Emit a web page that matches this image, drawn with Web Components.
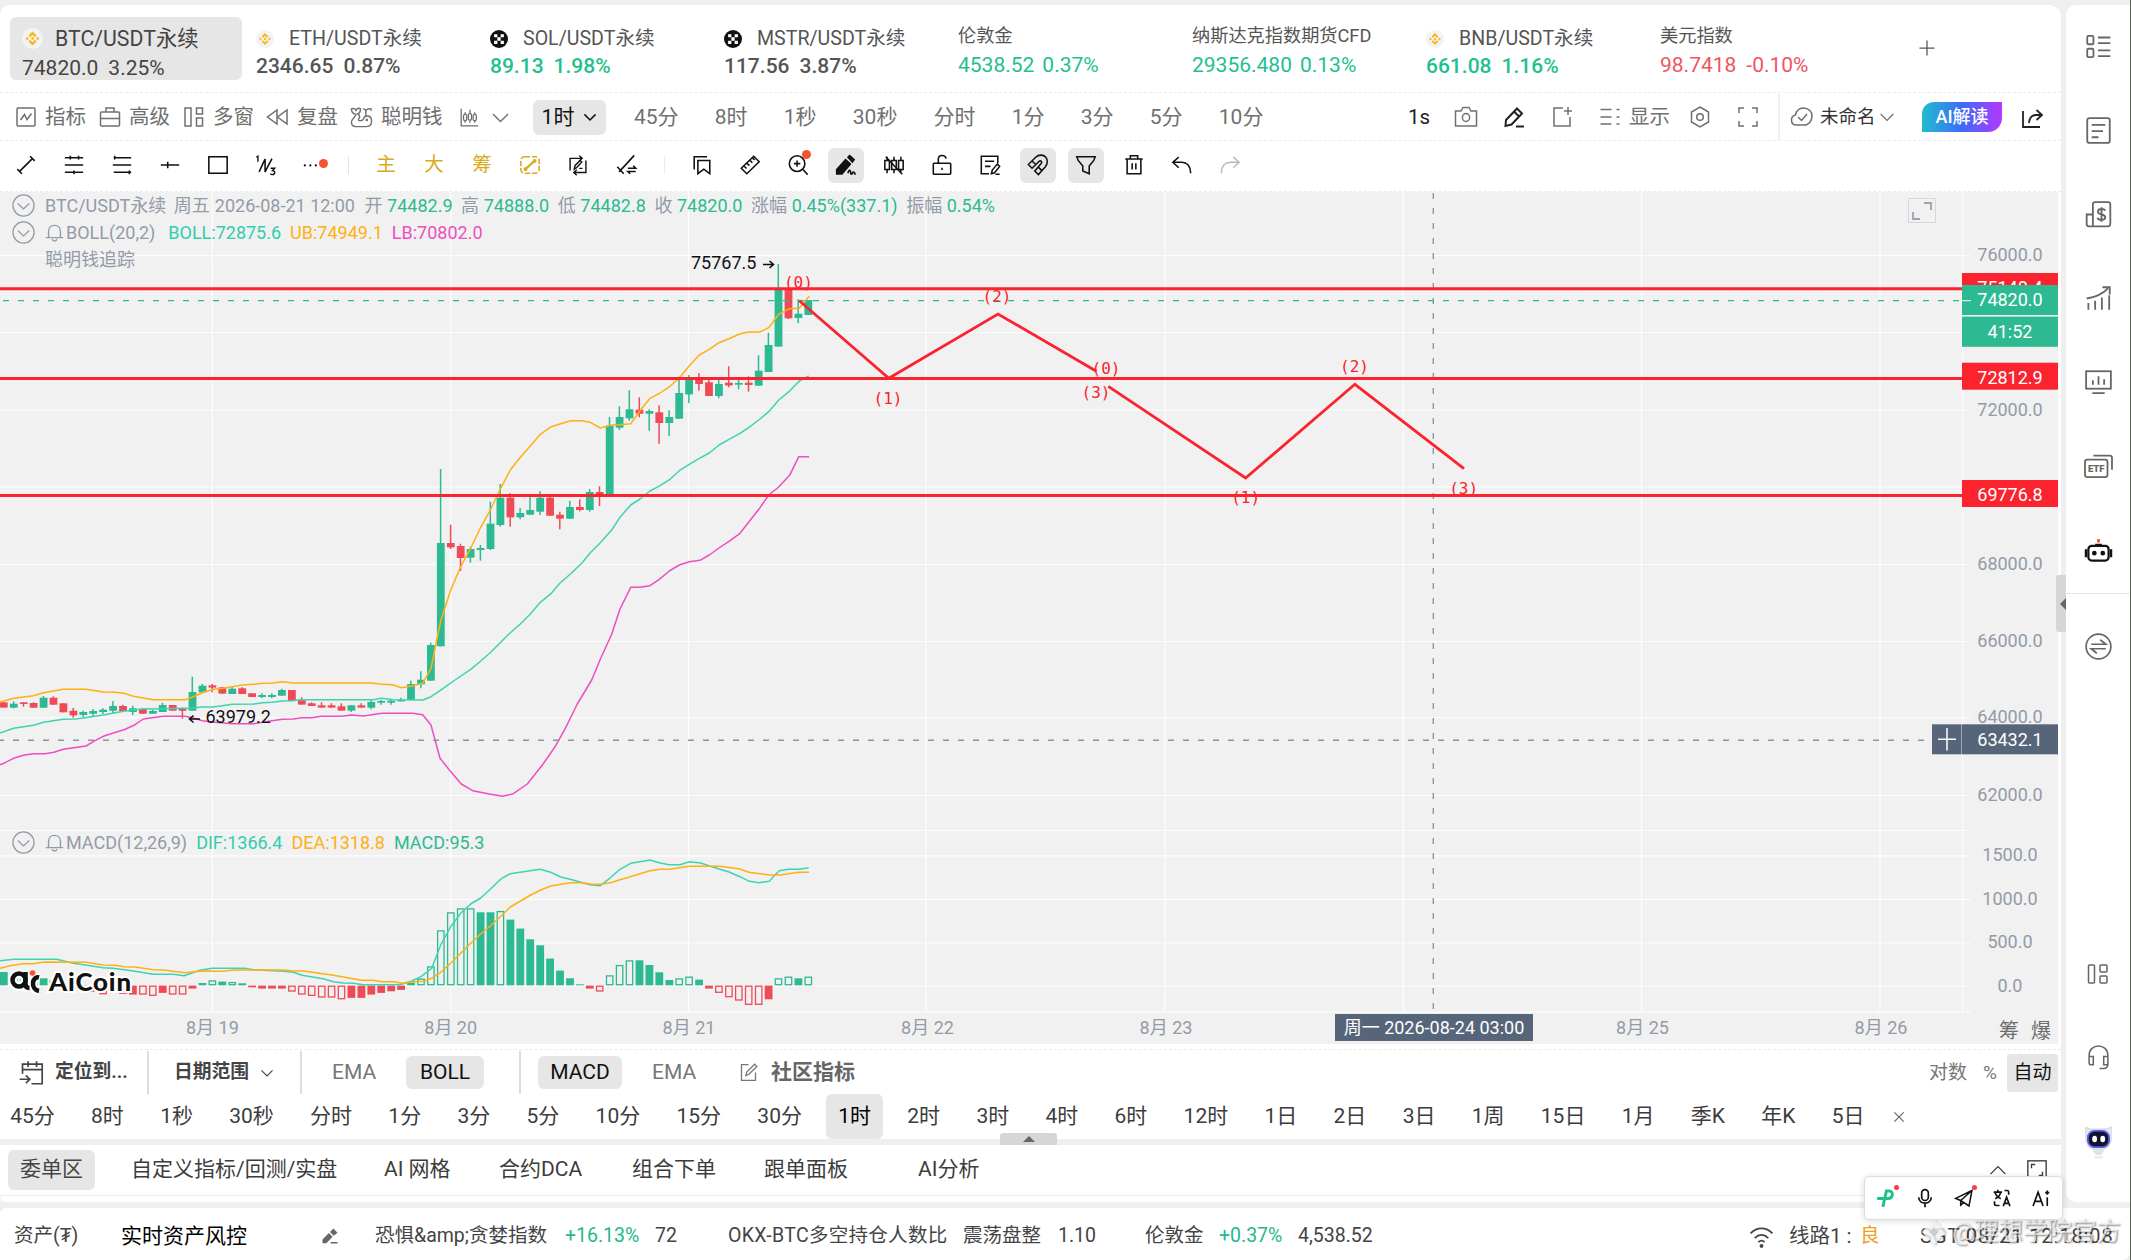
<!DOCTYPE html>
<html lang="zh-CN">
<head>
<meta charset="utf-8">
<title>BTC/USDT永续</title>
<style>
    html, body { margin: 0; height: 100%; }
    body {
        background: #efefef;
        color: #444;
        font-family: Roboto, "Noto Sans CJK SC", sans-serif;
        font-size: 21px;
        line-height: 1;
        overflow: hidden;
    }
</style>
</head>
<body>
<trade-app>
    <market-tabs slot="tabs">
        <market-tab icon="bnb" name="BTC/USDT永续" price="74820.0" change="3.25%" active></market-tab>
        <market-tab icon="bnb" name="ETH/USDT永续" price="2346.65" change="0.87%"></market-tab>
        <market-tab icon="okx" name="SOL/USDT永续" price="89.13" change="1.98%" tone="up"></market-tab>
        <market-tab icon="okx" name="MSTR/USDT永续" price="117.56" change="3.87%"></market-tab>
        <market-tab name="伦敦金" price="4538.52" change="0.37%" tone="up"></market-tab>
        <market-tab name="纳斯达克指数期货CFD" price="29356.480" change="0.13%" tone="up"></market-tab>
        <market-tab icon="bnb" name="BNB/USDT永续" price="661.08" change="1.16%" tone="up"></market-tab>
        <market-tab name="美元指数" price="98.7418" change="-0.10%" tone="down"></market-tab>
    </market-tabs>
    <main-toolbar slot="toolbar"></main-toolbar>
    <draw-toolbar slot="draw"></draw-toolbar>
    <price-chart slot="chart"></price-chart>
    <indicator-bar slot="indicators"></indicator-bar>
    <period-bar slot="periods"></period-bar>
    <order-tabs slot="orders"></order-tabs>
    <side-rail slot="rail"></side-rail>
    <status-bar slot="status"></status-bar>
    <float-tools slot="float"></float-tools>
</trade-app>

<script>
const ICONS = {
    bnb: '<circle cx="12" cy="12" r="12" fill="#f3f3f3" stroke="none"/><g fill="#f7b71d" stroke="none"><path d="M12 4l4.6 4.6-1.9 1.9L12 7.8l-2.7 2.7-1.9-1.9z"/><path d="M12 20l4.6-4.6-1.9-1.9-2.7 2.7-2.7-2.7-1.9 1.9z"/><path d="M6 10.100l1.900 1.900L6 13.900 4.100 12z"/><path d="M18 10.100l1.900 1.900-1.900 1.900-1.900-1.900z"/><path d="M12 10.100l1.900 1.900-1.900 1.900-1.900-1.900z"/></g>',
    okx: '<circle cx="12" cy="12" r="12" fill="#111" stroke="none"/><g fill="#fff" stroke="none"><path d="M5.500 5.500h4.300v4.300H5.500zM14.200 5.500h4.300v4.300h-4.300zM9.800 9.800h4.400v4.400H9.800zM5.500 14.200h4.300v4.300H5.500zM14.200 14.200h4.300v4.300h-4.300z"/></g>',
    plus: '<path d="M12 3v18M3 12h18"/>',
    indicator: '<rect x="3" y="3" width="18" height="18" rx="1"/><path d="M6.500 15l4-5.500 2.500 5 4.500-6"/>',
    briefcase: '<rect x="2.500" y="7" width="19" height="14" rx="1"/><path d="M8 7V3h8v4M2.500 13.500h19"/>',
    multi: '<rect x="3" y="3" width="6" height="18"/><rect x="14.500" y="3" width="6" height="6"/><rect x="14.500" y="13" width="6" height="8"/>',
    replay: '<path d="M12 5v14l-9.500-7zM22 5v14l-9.500-7z"/>',
    whale: '<path d="M6 8.500C3 8 1.500 6 1.500 3 3.500 2 5.500 3 6.200 4.500 7 3 9 2 11 3c0 3-1 4.500-3 5.500 2.500 1 2.500 3.500 1 5-1.500 2.500 4 2.500 5 0 .5-2 2-3 4-3 3 0 4.500 2.500 4.500 5.500 0 4-2.500 5.500-5.500 5.500H6c-3 0-4.500-2-4.500-4.500C1.500 13 6 12 6 8.500zM16.500 10V6c0-2-1.200-3.200-3-3M16.500 6c0-2 2-3.500 5.500-3v2"/><circle cx="17.500" cy="14.500" r=".6"/>',
    candles: '<path d="M2.500 2v19.500H22M7 6v2.500M7 15.500V18M12.500 3v4.500M12.500 15V18M18 6v2.500M18 15.500V18"/><rect x="5.200" y="8.500" width="3.600" height="7" rx="1.500"/><rect x="10.700" y="7.500" width="3.600" height="7.500" rx="1.500"/><rect x="16.200" y="8.500" width="3.600" height="7" rx="1.500"/>',
    down: '<path d="M2.500 7.500L12 17l9.500-9.500"/>',
    up: '<path d="M3 17l9-9 9 9"/>',
    camera: '<path d="M1.500 6h5.500l2-3.500h6L17 6h5.500v15h-21z"/><ellipse cx="12" cy="12.500" rx="3.600" ry="4"/>',
    pen: '<path d="M4 15L15 3.500l5 5L9.500 19.500 3.500 21zM12.500 7l4.500 4.500M14 21.500h8"/>',
    exportbox: '<path d="M13 3H4v18h16v-9M18 2v8M14 6h8"/>',
    listdots: '<path d="M2.500 4.500h11M2.500 12h11M2.500 19h11M18.500 4.500h3M18.500 12h3M18.500 19h3"/>',
    hex: '<path d="M12 2l8.500 5v10L12 22l-8.500-5V7z"/><circle cx="12" cy="12" r="3.300"/>',
    fullscreen: '<path d="M3 8V3h5M16 3h5v5M21 16v5h-5M8 21H3v-5"/>',
    cloud: '<path d="M6.500 20C3.500 20 1.500 18 1.500 15c0-2.500 1.500-4.500 4-5C6.500 5 10 3 13.500 3c5 0 8.500 3.500 8.500 8s-3 9-8 9zM8 12l3.500 3.500L17 9"/>',
    share: '<path d="M3 6v16h17M20.500 10h-4.500c-4 0-6.500 3-7 8M16.500 5l5.500 5-5.500 5"/>',
    trend: '<path d="M5 19L19 5M2.500 16.500l5 5M16.500 2.500l5 5"/>',
    lines3: '<path d="M2 4h20M2 12h20M2 20h20M8 2v4M17 2v4M12 18v4" />',
    lines4: '<path d="M3 4h19M2 12h20M3 20h19M4 2v4M20 18v4" />',
    hline: '<path d="M2 12h20M9.500 8.500v7"/>',
    rect: '<rect x="2" y="3" width="20" height="18"/>',
    wave: '<path d="M4.500 19.500L11 5.500v14L18.500 5"/><path d="M1.500 3.500L3.200 2.500V8.500M17 15.500h4.500l-2.500 2.600c3.800.2 3.200 4.400-.3 4.400-1 0-1.500-.3-2-1" stroke-width="1.500"/>',
    dots: '<g fill="currentColor" stroke="none"><circle cx="2" cy="12.500" r="1.200"/><circle cx="8" cy="12.500" r="1.200"/><circle cx="14" cy="12.500" r="1.200"/></g>',
    dashbox: '<rect x="2" y="3" width="20" height="18" rx="4" stroke-dasharray="6 2"/><path stroke-width="2.400" d="M7 16.500L17 7.500"/><circle cx="7" cy="16.500" r="1.300" fill="currentColor"/><circle cx="17" cy="7.500" r="1.300" fill="currentColor"/>',
    swapbox: '<path d="M2.500 18.500V4h14M13.500.8L17 4l-3.500 3.200M21.500 6.500V21h-14M10.500 17.800L7 21l3.500 3.200"/><path d="M7.500 17l1-4.500 6-6 2 2-6 6.500zM13.500 16h4" stroke-width="1.700"/>',
    trendswap: '<path d="M4.500 19.500L21 1.500M2.500 14l7 7.500M14 15.500h8.500l-2.500-2.500M22.500 19H14l2.500 2.500"/>',
    bookmark: '<path d="M3.500 17V3h14M7.500 7h13v14.500L14 16.500l-6.500 5z"/>',
    ruler: '<path d="M16 2.500l6 6L8.500 21.500l-6-6zM12 7l2.500 2.500M8.800 10.200l2.500 2.500M5.700 13.300l2.500 2.500M15 4.500l2 2"/>',
    zoom: '<circle cx="11" cy="10.500" r="8.500"/><path d="M17.500 17l5 5.500M11 7v7M7.500 10.500h7"/>',
    brush: '<path fill="currentColor" stroke="none" d="M1 22.500v-6L11.500 5l6.500 6L8 22.500zM13 3.500L16 .5l6 5.500-3 4z"/><path d="M14 21c1-4 3-4 3-1s2 2 2 .5 3-1 3 2"/>',
    hidecandles: '<path d="M4.500 3v4M4.500 17v4M12 3v4M12 17v4M19.500 3v4M19.500 17v4M3 3l18 19"/><path d="M2 7h5v10H2zM9.500 7h5v10h-5zM17 7h5v10h-5z"/>',
    lock: '<rect x="2.500" y="10" width="19" height="12" rx="1"/><path d="M8 10V5.500c0-5 7.500-5 8.500-.5M12 15v2.500"/>',
    note: '<path d="M20.500 10V2.500h-18v19H11M6.500 8h10M6.500 13.500h6M13.500 21.500l1-4L20 11l2.500 2.500L17 20.500zM18 22h4.500"/>',
    magnet: '<path d="M1.500 11.500l8-8c3-3 8.500-3 11 0s2 7.500-.5 10.500l-7.500 8.500-4-4 7-8c1.500-2-.5-4-2.500-2.300l-7.500 7.300zM5.500 7.700l4 3.800M12 14l4 3.800"/>',
    filter: '<path d="M2 3h20l-1.500 4-5 6v8.500l-7-3V13l-5-6z"/>',
    trash: '<path d="M2.500 5.500h19M8 5V2h8v3M4.500 6v15.500h15V6M10 10v7M14 10v7"/>',
    undo: '<path d="M8.500 3.500L2 9l6.500 6M2 9h9c7 0 10.500 5 10.500 12"/>',
    redo: '<path d="M15.500 3.500L22 9l-6.500 6M22 9h-9C6 9 2.500 14 2.500 21"/>',
    locate: '<path d="M4 13V4.500h17.500V22H12M4 9.500h17.500M9 2v5M16.500 2v5M1.500 18H10M7 14.500l3.500 3.500L7 21.500"/>',
    edit: '<path d="M12 3H4v18h16v-9M9 15.500l1-4L19 2.500l2.500 2.500-9 9z"/>',
    close: '<path d="M4 4l16 16M20 4L4 20"/>',
    corners: '<rect x="2" y="2" width="20" height="20"/><path d="M6 10V6h4M18 14v4h-4"/>',
    pencil: '<path fill="currentColor" stroke="none" d="M2 21.500v-5L10.500 8l5 5L7 21.500zM12 6.500L16.500 2 22 7.500 17 11.500zM13 20h9v2h-9z"/>',
    wifi: '<path d="M1.500 9c6-6.500 15-6.500 21 0M5.500 13.500c4-4 9-4 13 0M9 17.500c2-2 4-2 6 0"/><circle cx="12" cy="21" r="1" fill="currentColor"/>',
    rlist: '<rect x="2" y="2.500" width="5.500" height="7.500" rx="1"/><rect x="2" y="14" width="5.500" height="7.500" rx="1"/><path d="M11.500 4h11M11.500 9h11M11.500 15.500h11M11.500 20.500h11"/>',
    rdoc: '<rect x="2" y="1" width="20" height="22" rx="2"/><path d="M6 7h12M6 12.500h10M6 18h6"/>',
    rdollar: '<path d="M7 22.500V3c0-1.500 1-2 2-2h11.500c1.500 0 2 1 2 2v17c0 1.500-1 2.500-2 2.500H3.500c-1.500 0-2-1-2-2V12H7M18 8.500c-1-2-6.500-2-6.500 1 0 3.500 6.500 1.500 6.500 5 0 3-6 3-7 .5M14.700 5.500v13"/>',
    rchart: '<path d="M3 22v-6M9 22v-8M15 22V11M21.500 22V9M1.500 12c8-1 14-4 19-9M15.500 2h6.500v6.500"/>',
    rmonitor: '<rect x="1" y="2" width="22" height="15.500"/><path d="M7 14v-4M12 14V6.500M17 14v-5M6.500 21.500h11"/>',
    retf: '<rect x="0" y="5" width="20" height="15.500" rx="2"/><path d="M7.500 1.500H22c1.500 0 2 .5 2 2V14"/><text x="10" y="15.800" font-size="8.500" font-weight="900" text-anchor="middle" fill="currentColor" stroke="none">ETF</text>',
    rbot: '<rect x="3" y="7" width="18" height="13" rx="3" stroke-width="2"/><path stroke-width="2" d="M.8 10v7M23.200 10v7M9 6h6"/><path stroke="#f0562e" stroke-width="2.500" d="M12 1v3"/><circle cx="8.300" cy="13.500" r="1.300" fill="currentColor"/><circle cx="15.800" cy="13.500" r="1.300" fill="currentColor"/>',
    rswap: '<circle cx="12" cy="12" r="11"/><path d="M5.500 10h13l-5-4M18.500 14h-13l5 4"/>',
    rgrid: '<rect x="2.500" y="3" width="6" height="18" rx="1"/><rect x="14" y="3" width="7" height="7" rx="1"/><rect x="14" y="14" width="7" height="7" rx="1"/>',
    rheadset: '<path d="M3 14V10c0-12 18-12 18 0v4M3 11h4v8H5c-1 0-2-.5-2-2zM21 11h-4v8h4zM21 18c0 3-1 4.500-4 4.500h-4"/>',
    rball: '<path d="M1.500 1l4 1.500h13l4-1.500v9c0 7-5 9.500-10.500 9.500S1.500 17 1.500 10z" fill="#e6eaec" stroke="#d3dadd" stroke-width="1"/><rect x="3.200" y="4" width="17.600" height="13.500" rx="5.500" fill="#10152b" stroke="#5a5cf0" stroke-width="1.500"/><ellipse cx="8.800" cy="10.800" rx="2" ry="2.700" fill="#fff" stroke="none"/><ellipse cx="15.500" cy="10.800" rx="2" ry="2.700" fill="#fff" stroke="none"/><path d="M7 20h10l-3 4h-4z" fill="#dbe2e6" stroke="none"/><ellipse cx="12" cy="26" rx="4" ry="1.200" fill="#ececec" stroke="none"/>',
    fpay: '<path stroke="#1fc08e" stroke-width="3.300" d="M9 21.500L13 3.500h3.500c5 0 4.500 8.500-1.500 8.500H2.500"/>',
    fmic: '<rect x="8" y="2" width="8" height="13" rx="4"/><path d="M4.500 11c0 9.500 15 9.500 15 0M12 18.500V23"/>',
    fsend: '<path d="M21.500 3L2 12.500l6 2.500 10 6.500zM8 15L21.500 3M8 15v5.500l3.500-3"/>',
    flang: '<path d="M2 5h10M7 2v3M4 13c4-2 6-5 6.500-8M3.500 5c1 4 4 6.500 7 8M13.500 22l4-11 4 11M15 18.500h5.500M3 16v3c0 1.500 1 2 2 2h4M15 3h3c1.500 0 2 1 2 2v3"/>',
    fai: '<path d="M2.500 21.500L8.500 5l6 16.500M4.500 16h8M19.500 11v10.500M19.500 3v5M17 5.500h5"/>',
    bell: '<path d="M1 18.500h22M4.500 18.500v-8c0-10 15-10 15 0v8M9 20.500c.5 3 5.500 3 6 0"/>',
    fold: '<circle cx="12" cy="12" r="11"/><path d="M6 10l6 5.500 6-5.500"/>'
};

class SvgIcon extends HTMLElement {
    connectedCallback() {
        const size = this.getAttribute('size') || 24;
        const sw = this.getAttribute('weight') || 1.5;
        this.attachShadow({ mode: 'open' });
        this.shadowRoot.innerHTML = `
            <style>
                :host { display: inline-flex; flex: none; width: ${size}px; height: ${size}px; position: relative; }
                svg { width: 100%; height: 100%; overflow: visible; }
                .badge { position: absolute; right: -2px; top: -4px; width: 9px; height: 9px; border-radius: 50%; background: #f4542c; }
                .badge.mid { top: 5px; right: -3px; }
            </style>
            <svg viewBox="0 0 24 24" fill="none" stroke="currentColor" stroke-width="${sw}">${ICONS[this.getAttribute('name')]}</svg>
            ${this.hasAttribute('badge') ? `<span class="badge ${this.getAttribute('badge')}"></span>` : ''}
        `;
    }
}
customElements.define('svg-icon', SvgIcon);

const icon = (name, size = 24, extra = '') => `<svg-icon name="${name}" size="${size}" ${extra}></svg-icon>`;

// Row of items, each given as [start, html, class]; a cell is as wide as the step to the next start.
function cells(items, end) {
    return items.map(([start, html, cls], i) => {
        const next = i + 1 < items.length ? items[i + 1][0] : end;
        return `<div class="cell ${cls || ''}" style="width:${next - start}px">${html}</div>`;
    }).join('');
}
const ROW_CSS = `
    :host { display: flex; box-sizing: border-box; align-items: center; white-space: nowrap; }
    .cell { flex: none; display: flex; align-items: center; height: 100%; }
    .pill { display: flex; align-items: center; justify-content: center; background: #e6e6e6; border-radius: 6px; color: #111; box-sizing: border-box; }
    .vline { width: 2px; height: 100%; background: #dcdcdc; }
`;

class TradeApp extends HTMLElement {
    connectedCallback() {
        this.attachShadow({ mode: 'open' });
        this.shadowRoot.innerHTML = `
            <style>
                :host {
                    display: flex;
                    flex-direction: column;
                    gap: 6px;
                    box-sizing: border-box;
                    width: 2131px;
                    height: 1260px;
                    padding-top: 5px;
                    border-right: 1px solid #5c6252;
                    position: relative;
                }
                .top { display: flex; gap: 5px; height: 1197px; }
                .left { display: flex; flex: none; flex-direction: column; gap: 6px; width: 2061px; }
                .card { display: flex; flex-direction: column; background: #fff; }
                .main { height: 1134px; border-radius: 10px 12px 0 0; }
                .orders { height: 57px; border-radius: 0 0 6px 6px; }
                .rail { flex: 1; min-width: 0; border-radius: 10px 0 0 10px; }
                .status { flex: 1; border-radius: 6px 0 8px 0; }
            </style>
            <div class="top">
                <div class="left">
                    <div class="card main">
                        <slot name="tabs"></slot>
                        <slot name="toolbar"></slot>
                        <slot name="draw"></slot>
                        <slot name="chart"></slot>
                        <slot name="indicators"></slot>
                        <slot name="periods"></slot>
                    </div>
                    <div class="card orders"><slot name="orders"></slot></div>
                </div>
                <div class="card rail"><slot name="rail"></slot></div>
            </div>
            <div class="card status"><slot name="status"></slot></div>
            <slot name="float"></slot>
        `;
    }
}
customElements.define('trade-app', TradeApp);

class MarketTabs extends HTMLElement {
    connectedCallback() {
        this.attachShadow({ mode: 'open' });
        this.shadowRoot.innerHTML = `
            <style>
                :host { display: flex; box-sizing: border-box; height: 88px; padding: 12px 0 0 10px; gap: 2px; border-bottom: 1px dashed #ebebeb; }
                .add { color: #555; padding: 21px 0 0 35px; }
            </style>
            <slot></slot>
            <div class="add">${icon('plus', 20)}</div>
        `;
    }
}
customElements.define('market-tabs', MarketTabs);

class MarketTab extends HTMLElement {
    connectedCallback() {
        const ic = this.getAttribute('icon');
        const active = this.hasAttribute('active');
        this.attachShadow({ mode: 'open' });
        this.shadowRoot.innerHTML = `
            <style>
                :host { display: flex; flex-direction: column; box-sizing: border-box; width: 232px; height: 63px; padding: ${active ? 11 : ic ? 11 : 9}px 0 0 12px; border-radius: 6px; gap: ${active ? 9 : ic ? 7 : 8}px; color: #555; white-space: nowrap; }
                :host([active]) { background: #e6e6e6; color: #444; }
                .name { display: flex; align-items: center; height: 21px; font-size: ${active ? 21.300 : ic ? 19.600 : 18.200}px; }
                .ic { display: flex; width: 33px; align-items: center; }
                .price { display: flex; gap: ${ic ? 10 : 8}px; font-size: 21px; font-weight: ${ic && !active ? 500 : 400}; }
                :host([tone="up"]) .price { color: #1fc08e; }
                :host([tone="down"]) .price { color: #ef5560; gap: 10px; }
            </style>
            <div class="name">${ic ? `<span class="ic">${icon(ic, active ? 21 : 18)}</span>` : ''}${this.getAttribute('name')}</div>
            <div class="price"><span>${this.getAttribute('price')}</span><span>${this.getAttribute('change')}</span></div>
        `;
    }
}
customElements.define('market-tab', MarketTab);

class MainToolbar extends HTMLElement {
    connectedCallback() {
        const periods = ['45分', '8时', '1秒', '30秒', '分时', '1分', '3分', '5分', '10分'];
        this.attachShadow({ mode: 'open' });
        this.shadowRoot.innerHTML = `
            <style>${ROW_CSS}
                :host { height: 48px; padding: 1px 0 0 14px; color: #707070; font-size: 20.500px; border-bottom: 1px dashed #ebebeb; }
                .pill { width: 73px; height: 35px; gap: 9px; font-size: 21px; }
                .periods { display: flex; gap: 36.200px; width: 774px; font-size: 21px; }
                .dark { color: #222; }
                .name { color: #333; font-size: 18.500px; }
                .ai { width: 80px; height: 30px; display: flex; align-items: center; justify-content: center; border-radius: 12px 0 14px 0; background: linear-gradient(90deg, #22bcd0, #3c6cf8 50%, #b637ff); color: #fff; font-size: 18px; font-weight: 500; }
            </style>
            ${cells([
                [14, icon('indicator')], [45, '指标'], [98, icon('briefcase')], [129, '高级'],
                [182, icon('multi')], [213, '多窗'], [265, icon('replay')], [297, '复盘'],
                [350, icon('whale', 23)], [381, '聪明钱'], [459, icon('candles', 21)], [491, icon('down', 19, 'weight="1.8"')],
                [533, `<div class="pill">1时${icon('down', 14, 'weight="2.6"')}</div>`]
            ], 634)}
            <div class="periods">${periods.map(p => `<span>${p}</span>`).join('')}</div>
            ${cells([
                [1408, '1s', 'dark'], [1454, icon('camera')], [1502, icon('pen', 24, 'weight="2"'), 'dark'],
                [1550, icon('exportbox')], [1598, icon('listdots')], [1629, '显示'], [1688, icon('hex')],
                [1736, icon('fullscreen')], [1778, '<div class="vline" style="background:#efefef"></div>'],
                [1790, icon('cloud')], [1820, '未命名', 'name'], [1879, icon('down', 16, 'weight="1.9"')],
                [1922, '<div class="ai">AI解读</div>'], [2020, icon('share', 24, 'weight="1.8"'), 'dark']
            ], 2046)}
        `;
    }
}
customElements.define('main-toolbar', MainToolbar);

class DrawToolbar extends HTMLElement {
    connectedCallback() {
        const tools = ['trend', 'lines3', 'lines4', 'hline', 'rect', 'wave', 'dots', '|', '主', '大', '筹', 'dashbox', 'swapbox', 'trendswap', '||', 'bookmark', 'ruler', 'zoom', 'brush', 'hidecandles', 'lock', 'note', 'magnet', 'filter', 'trash', 'undo', 'redo'];
        const on = ['brush', 'magnet', 'filter'];
        const badge = { dots: 'badge="mid"', zoom: 'badge="top"' };
        this.attachShadow({ mode: 'open' });
        this.shadowRoot.innerHTML = `
            <style>${ROW_CSS}
                :host { height: 51px; padding: 0 0 2px 2px; color: #111; border-bottom: 1px dashed #ebebeb; }
                .cell { width: 48px; justify-content: center; }
                .sep { flex: none; width: 24px; height: 18px; }
                .sep.wide { width: 28px; }
                .sep i { display: block; width: 1px; height: 18px; margin-left: 10px; background: #e6e3da; }
                .wide i { margin-left: 14px; background: #f3ecce; }
                .pill { width: 36px; height: 35px; }
                .gold { color: #d9aa22; font-size: 19.500px; font-weight: 400; }
                .off { color: #bbb; }
            </style>
            ${tools.map(t => {
                if (t[0] === '|') return `<span class="sep ${t === '||' ? 'wide' : ''}"><i></i></span>`;
                const body = ICONS[t] ? icon(t, t === 'swapbox' ? 20 : 22, `weight="1.7" ${badge[t] || ''}`) : t;
                const cls = !ICONS[t] || t === 'dashbox' ? 'gold' : t === 'redo' ? 'off' : '';
                return `<div class="cell ${cls}">${on.includes(t) ? `<div class="pill">${body}</div>` : body}</div>`;
            }).join('')}
        `;
    }
}
customElements.define('draw-toolbar', DrawToolbar);

class ChartLegend extends HTMLElement {
    connectedCallback() {
        this.attachShadow({ mode: 'open' });
        this.shadowRoot.innerHTML = `
            <style>
                :host { display: flex; align-items: center; height: 27px; padding-left: 12px; color: #939ba8; font-size: 18px; white-space: nowrap; }
                .fold { width: 33px; display: flex; }
                .bell { width: 21px; display: flex; }
            </style>
            <span class="fold">${this.hasAttribute('plain') ? '' : icon('fold', 23, 'weight="1.3"')}</span>
            ${this.hasAttribute('bell') ? `<span class="bell">${icon('bell', 19, 'weight="1.8"')}</span>` : ''}
            <slot></slot>
        `;
    }
}
customElements.define('chart-legend', ChartLegend);

// Candles are [up, bodyTop, bodyBottom, high, low]; y values are thirds of a pixel below the base of their group.
const EARLY = [
    [0,187,203,187,203],[1,191,203,184,205],[0,187,192,187,200],[0,189,203,187,203],[1,173,203,168,203],[0,173,194,169,194],
    [0,190,217,190,217],[0,212,226,204,233],[1,216,225,212,232],[1,213,221,207,228],[1,209,216,205,222],[1,198,212,183,220],
    [0,198,213,194,213],[1,205,216,197,225],[0,206,221,206,221],[1,213,221,209,221],[1,195,216,188,216],[0,195,212,195,212],
    [0,206,212,203,236],[1,156,212,110,212],[1,137,157,132,160],[0,136,143,132,157],[0,142,161,142,161],[1,146,162,140,162],
    [0,145,162,142,162],[0,160,171,160,171],[1,165,171,160,174],[1,165,171,160,174],[1,150,167,146,167],[0,150,183,150,183],
    [0,181,194,172,194],[0,190,198,187,198],[0,196,203,187,203],[0,196,203,190,203],[0,199,212,190,212],[1,196,212,196,216],
    [0,196,203,190,203],[1,186,203,177,208],[1,183,188,180,194],[1,182,188,180,194],[1,179,184,173,184],[1,132,180,122,180],
    [1,119,133,94,145],[1,15,122,8,122]
];
const LATE = [
    [1,909,1219,687,1219],[0,909,922,854,927],[0,918,954,911,993],[1,927,953,920,968],[1,924,930,915,962],[1,851,927,785,930],
    [1,773,855,732,860],[0,773,832,760,860],[1,819,832,804,838],[1,810,824,770,824],[1,773,815,754,825],[0,773,827,765,827],
    [0,824,836,815,868],[1,801,836,782,836],[0,801,810,778,814],[1,756,810,747,815],[0,756,764,739,798],[1,557,765,531,765],
    [1,531,563,499,570],[1,508,535,451,542],[0,509,521,472,532],[1,513,521,508,572],[0,517,549,496,611],[1,531,549,511,588],
    [1,459,536,410,536],[1,416,463,405,489],[0,415,432,399,452],[0,427,468,420,468],[1,432,468,420,475],[0,428,436,379,442],
    [1,429,434,420,448],[0,428,435,409,455],[1,392,437,346,437],[1,315,396,278,396],[1,148,320,72,320],[0,148,235,148,237],
    [1,221,234,178,250],[1,180,225,180,225]
];
// MACD bars: signed height in thirds of a pixel; a trailing "o" marks a hollow bar.
const BARS = ('40 30 27o 24 21 14 6 -8 -14 -18 -26o -20 -25 -27 -27o -31o -22 -27o -27o -9 7 15o 11 10o 6 -5 -9 -9 -9 -18o -27o -31o -36o -36o -41o -37 -37 -27 -22 -17 -13 8 20o 57o ' +
    '165o 219o 231o 231o 219 219 223o 197 170 138 120 80 44 21 3 -9 -18o 30o 61o 75o 75 61 39 16 21o 26o 17 -9 -22o -35o -45o -58o -58o -41 21o 26o 21 26o').split(' ');

const A = [0, 640], B = [400, 240], C = [380, 830];
const UB = [[A, '0,186 41,175 100,167 131,158 190,148 258,148 310,156 345,157 372,160 400,169 460,179 555,179 580,170 610,157 640,148 670,145 727,135 762,133 790,130 820,129 848,125 878,129 1115,129 1145,133 1178,134 1204,143 1235,138 1268,130 1293,85'],
    [B, '110,1200 123,1140 152,1050 182,980 212,925 242,862 272,808 302,745 331,690 361,652 391,618 421,583 454,560 482,551 512,542 545,542 571,547 601,564 635,555 660,554 692,551 720,512 750,475 780,459 810,439 838,414 868,377 898,345 928,328 957,308 987,296 1020,281 1047,276 1080,276 1106,263 1136,223 1168,206 1198,205 1228,168']];
const MB = [[A, '0,279 41,265 100,256 131,247 190,238 225,237 250,234 310,225 370,214 430,207 490,206 577,204 607,201 637,201 667,197 697,193 762,192 787,188 816,187 847,183 878,182 900,179 1120,179 1145,175 1180,179 1268,180 1293,170 1320,152'],
    [B, '165,1320 212,1288 242,1263 272,1237 302,1207 331,1178 361,1152 391,1122 421,1087 454,1060 480,1029 512,1001 545,970 571,938 601,908 635,870 660,832 692,795 720,777 750,753 780,737 810,718 838,692 868,673 898,655 928,639 957,615 987,598 1020,580 1047,562 1076,540 1106,515 1136,480 1168,454 1198,423 1226,408']];
const LB = [[A, '0,374 15,368 41,355 70,346 100,341 135,341 162,337 190,328 258,318 285,302 310,289 340,279 372,269 402,256 430,237 490,229 555,229 580,234 607,242 637,246 697,251 762,251 787,247 847,238 880,237 906,233 935,233 964,229 1025,229 1055,225 1090,228 1145,220 1238,220 1268,224 1293,255 1320,355 1350,392 1384,432 1418,452 1468,462 1508,469 1540,461 1582,432 1630,371 1664,322 1696,265 1732,192'],
    [B, '575,1320 601,1258 635,1183 660,1107 692,1042 720,1042 750,1037 778,1018 808,993 838,975 868,965 900,961 928,945 957,924 987,904 1020,880 1047,845 1080,803 1106,765 1136,741 1170,704 1196,650 1227,650']];
const DIF = [[A, '0,962 41,958 170,958 220,970 310,983 340,985 400,993 460,1003 520,1003 552,1007 600,991 637,985 735,985 760,989 850,994 880,997 906,1006 970,1016 1000,1025 1030,1029 1060,1030 1090,1034 1200,1034 1233,1024'],
    [C, '123,440 155,415 182,345 212,290 242,250 272,222 302,204 331,178 365,145 391,131 480,118 512,127 540,140 570,148 600,156 630,164 661,167 689,145 720,118 752,100 810,90 840,99 868,104 900,104 928,95 962,99 987,107 1017,117 1047,126 1080,140 1108,154 1138,158 1168,154 1182,138 1198,122 1225,118 1256,118 1286,113']];
const DEA = [[A, '0,985 30,977 70,971 100,971 131,966 258,967 310,975 345,976 372,980 405,981 460,989 490,990 555,998 607,993 670,994 700,990 850,990 880,993 910,993 1000,1006 1085,1021 1120,1021 1145,1025 1180,1025'],
    [C, '66,460 93,456 130,454 155,445 182,427 212,400 242,370 272,340 302,312 331,288 361,260 391,231 452,195 482,180 512,168 570,158 605,158 635,163 661,163 692,158 720,149 780,131 810,122 840,118 868,118 928,109 1020,109 1080,117 1106,127 1168,135 1200,135 1256,127 1287,127']];

class PriceChart extends HTMLElement {
    line(parts, color) {
        const pts = parts.map(([[x0, y0], s]) => s.split(' ').map(p => {
            const [x, y] = p.split(',');
            return (x0 + x / 3).toFixed(1) + ',' + (y0 + y / 3).toFixed(1);
        }).join(' ')).join(' ');
        return `<polyline points="${pts}" fill="none" stroke="${color}" stroke-width="1.500" stroke-linejoin="round"/>`;
    }
    candles() {
        const all = EARLY.map(c => [640, c]).concat(LATE.map(c => [240, c]));
        return all.map(([base, [up, top, bottom, hi, lo]], i) => {
            const x = 212.4 + 9.932 * (i - 21);
            const y = v => base + v / 3;
            const color = up ? '#2dba92' : '#ef4b57';
            return `<rect x="${(x - 3.9).toFixed(1)}" y="${y(top).toFixed(1)}" width="7.800" height="${((bottom - top) / 3).toFixed(1)}" fill="${color}"/>
                <path d="M${(x - 0.2).toFixed(1)} ${y(hi).toFixed(1)}V${y(lo).toFixed(1)}" stroke="${color}" stroke-width="1.500"/>`;
        }).join('');
    }
    bars() {
        return BARS.map((b, i) => {
            const h = parseFloat(b) / 3;
            const x = 212.4 + 9.932 * (i - 21);
            const color = h > 0 ? '#2dba92' : '#ef4b57';
            const top = h > 0 ? 985.3 - h : 985.6;
            if (b.endsWith('o')) {
                return `<rect x="${(x - 3.2).toFixed(1)}" y="${(top + 0.6).toFixed(1)}" width="6.400" height="${(Math.abs(h) - 1.2).toFixed(1)}" fill="#f1f1f1" stroke="${color}" stroke-width="1.300"/>`;
            }
            return `<rect x="${(x - 3.9).toFixed(1)}" y="${top.toFixed(1)}" width="7.800" height="${Math.abs(h).toFixed(1)}" fill="${color}"/>`;
        }).join('');
    }
    connectedCallback() {
        const text = (x, y, s, fill, extra = '') => `<text x="${x}" y="${y + 6.4}" fill="${fill}" ${extra}>${s}</text>`;
        const mid = 'text-anchor="middle"';
        const grid = [255.7, 332.5, 410, 487, 564.5, 641.5, 717.6, 795.5, 830.5, 855.8, 899.3, 943, 986, 1011.8]
            .map(y => `M0 ${y}H1970`).join('') + [212.4, 450.7, 688.5, 926, 1165, 1403.3, 1641.6, 1880, 1962.6].map(x => `M${x} 192V1012`).join('');
        const axis = [[254.5, '76000.0'], [409.5, '72000.0'], [486.5, '70000.0'], [563.6, '68000.0'], [640.6, '66000.0'], [717, '64000.0'], [794.5, '62000.0'],
            [854.5, '1500.0'], [898.300, '1000.0'], [942, '500.0'], [985.300, '0.0']].map(([y, s]) => text(2010, y, s, '#939ba8', mid)).join('');
        const days = [[212.4, 19], [450.7, 20], [689, 21], [927.5, 22], [1166, 23], [1642.500, 25], [1881, 26]]
            .map(([x, d]) => text(x, 1027.3, '8月 ' + d, '#939ba8', mid)).join('');
        const tag = (y, h, s, fill, dy = 0) => `<rect x="1962" y="${y}" width="96" height="${h}" fill="${fill}"/>` + text(2010, y + h / 2 + dy, s, '#fff', mid);
        const waves = [[798.4, 282.5, 0], [888, 398.5, 1], [997, 296.5, 2], [1106, 368.5, 0], [1096, 392.5, 3], [1245.6, 497.7, 1], [1354.5, 367, 2], [1463.7, 488.500, 3]]
            .map(([x, y, n]) => `<text class="wave" x="${x}" y="${y + 5}" text-anchor="middle">(${n})</text>`).join('');

        this.attachShadow({ mode: 'open' });
        this.shadowRoot.innerHTML = `
            <style>
                :host { display: block; position: relative; width: 2058px; height: 852px; background: #f1f1f1; }
                svg { display: block; font-size: 18px; }
                .wave { font: 16px "DejaVu Sans Mono", monospace; fill: #fa232e; }
                .info, .macd { position: absolute; left: 0; top: 0; }
                .macd { top: 637px; }
                .g { color: #2dba92; margin: 0 8.600px 0 4.600px; }
                .k { margin-right: 13px; }
                .m { color: #32cdb0; } .o { color: #ffb012; } .p { color: #ed4fc0; }
                .m, .o, .p { margin-right: 9px; }
                .macd .k { margin-right: 9px; }
                .extra { position: absolute; right: 7px; bottom: 3px; display: flex; gap: 12px; color: #6c6c6c; font-size: 20px; }
                .expand { position: absolute; left: 1908px; top: 6px; color: #9aa2ae; box-sizing: border-box; width: 28px; height: 25px; border: 1px solid #d6d8dc; display: flex; align-items: center; justify-content: center; }
                .logo { font: 900 24px Lato, sans-serif; letter-spacing: .8px; fill: #111; stroke: #fff; stroke-width: 4px; paint-order: stroke; }
            </style>
            <svg width="2058" height="852" viewBox="0 192 2058 852">
                <path d="${grid}" stroke="#fdfdfd" stroke-width="1.200" fill="none"/>
                ${axis}${days}
                ${this.candles()}
                ${this.line(UB, '#ffb012')}${this.line(MB, '#3ed3b3')}${this.line(LB, '#ed4fc0')}
                ${this.bars()}
                ${this.line(DIF, '#3ed3b3')}${this.line(DEA, '#ffb012')}
                <path d="M3 300.700H1962" stroke="#2dba92" stroke-width="1.300" stroke-dasharray="6 9"/>
                <path d="M-2 740.200H1930M1433.300 193V1011" stroke="#8b95a5" stroke-width="1.400" stroke-dasharray="6 9" fill="none"/>
                <g stroke="#fa232e" stroke-width="3" fill="none">
                    <path d="M0 288.700H1962M0 378.500H1962M0 495.600H1962"/>
                    <path stroke-width="2.800" d="M799.300 300.700L888.800 378.300L998 314L1096.400 371.300M1108.300 386.300L1245.600 478L1354.900 384.300L1464 468.700"/>
                </g>
                ${waves}
                ${text(691, 262.4, '75767.5', '#111')}${text(205.5, 716.7, '63979.2', '#111')}
                <path d="M763 264.500h10M769.500 261l4 3.500-4 3.500M200 719h-10M193.500 715.500l-4 3.500 4 3.500" stroke="#111" stroke-width="1.600" fill="none"/>
                ${tag(273, 30, '75140.4', '#fa232e')}
                ${tag(285, 30, '74820.0', '#2dba92')}${tag(316.6, 30.2, '41:52', '#2dba92')}
                <path d="M1962 300.700h9" stroke="#fff"/>
                ${tag(362.7, 27, '72812.9', '#fa232e', 1)}${tag(480, 27, '69776.8', '#fa232e', 1)}
                ${tag(724.3, 30, '63432.1', '#56657a')}
                <rect x="1932" y="724.300" width="29.500" height="30" fill="#56657a"/>
                <path d="M1938 739.300h18M1947 728v22.500" stroke="#fff" stroke-width="1.500"/>
                <rect x="1335" y="1014" width="198" height="27" fill="#56657a"/>
                ${text(1434, 1027.3, '周一 2026-08-24 03:00', '#fff', mid)}
                <g fill="none" stroke="#fff" stroke-width="9"><circle cx="19" cy="980" r="6.500"/><path d="M25 973v14l4 2M40 978c-9-2-10 12-1 13"/></g>
                <g fill="none" stroke="#111" stroke-width="4.500"><circle cx="19" cy="980" r="6.500"/><path d="M25.500 972v12c0 3 2 4 4 4M39 977.500c-7-2-9 12 0 13.500"/></g>
                <circle cx="32.500" cy="973" r="2.800" fill="#f4542c"/>
                <text class="logo" x="49" y="991" textLength="83" lengthAdjust="spacingAndGlyphs">AiCoin</text>
            </svg>
            <div class="info">
                <chart-legend><span>BTC/USDT永续</span><span style="margin:0 5px 0 7.500px">周五</span><span style="margin-right:9.500px">2026-08-21 12:00</span>
                    开<span class="g">74482.9</span>高<span class="g">74888.0</span>低<span class="g">74482.8</span>收<span class="g">74820.0</span>涨幅<span class="g">0.45%(337.1)</span>振幅<span class="g">0.54%</span></chart-legend>
                <chart-legend bell><span class="k">BOLL(20,2)</span><span class="m">BOLL:72875.6</span><span class="o">UB:74949.1</span><span class="p">LB:70802.0</span></chart-legend>
                <chart-legend plain>聪明钱追踪</chart-legend>
            </div>
            <div class="macd"><chart-legend bell><span class="k">MACD(12,26,9)</span><span class="m">DIF:1366.4</span><span class="o">DEA:1318.8</span><span style="color:#2dba92">MACD:95.3</span></chart-legend></div>
            <div class="expand"><svg width="20" height="18" viewBox="0 0 20 18" fill="none" stroke="currentColor" stroke-width="1.800"><path d="M12 1h7v7M1 10v7h7"/></svg></div>
            <div class="extra"><span>筹</span><span>爆</span></div>
        `;
    }
}
customElements.define('price-chart', PriceChart);

class IndicatorBar extends HTMLElement {
    connectedCallback() {
        this.attachShadow({ mode: 'open' });
        this.shadowRoot.innerHTML = `
            <style>${ROW_CSS}
                :host { height: 45px; margin-top: 5px; padding: 1px 0 0 18px; color: #777; border-top: 1px dashed #ebebeb; }
                .bold { font-weight: 700; font-size: 18.800px; color: #444; }
                .soft { color: #666; font-size: 21px; }
                .dark { color: #444; }
                .pill { height: 33px; }
                .right { font-size: 19px; }
            </style>
            ${cells([
                [18, icon('locate', 27), 'dark'], [55, '定位到...', 'bold'], [147, '<div class="vline"></div>'],
                [174, '日期范围', 'bold'], [260, icon('down', 14, 'weight="2"'), 'dark'], [300, '<div class="vline"></div>'],
                [332, 'EMA'], [406, '<div class="pill" style="width:78px">BOLL</div>'], [519, '<div class="vline"></div>'],
                [538, '<div class="pill" style="width:84px">MACD</div>'], [652, 'EMA'], [738, icon('edit', 21)],
                [771, '社区指标', 'bold soft'], [1929, '对数', 'right'], [1983, '%', 'right'],
                [2007, '<div class="pill" style="width:51px;height:38px;border-radius:3px">自动</div>', 'right']
            ], 2058)}
        `;
    }
}
customElements.define('indicator-bar', IndicatorBar);

class PeriodBar extends HTMLElement {
    connectedCallback() {
        const list = '45分 8时 1秒 30秒 分时 1分 3分 5分 10分 15分 30分 1时 2时 3时 4时 6时 12时 1日 2日 3日 1周 15日 1月 季K 年K 5日'.split(' ');
        this.attachShadow({ mode: 'open' });
        this.shadowRoot.innerHTML = `
            <style>
                :host { display: flex; align-items: center; height: 45px; position: relative; padding-left: 4px; color: #3c3c3c; font-size: 21px; white-space: nowrap; }
                .p { display: flex; align-items: center; height: 45px; padding: 0 12.200px; margin-left: 11.900px; border-radius: 6px; }
                .p:first-of-type { margin-left: -6px; }
                .on { background: #e6e6e6; color: #000; }
                svg-icon { margin-left: 15px; color: #666; }
                .handle { position: absolute; left: 1000px; top: 39px; width: 57px; height: 12px; border-radius: 3px 3px 0 0; background: #d6d6d6; display: flex; align-items: center; justify-content: center; z-index: 2; }
                .handle i { border: 6px solid transparent; border-top: 0; border-bottom-color: #666; }
            </style>
            ${list.map(p => `<span class="p ${p === '1时' ? 'on' : ''}">${p}</span>`).join('')}
            ${icon('close', 14, 'weight="2"')}
            <div class="handle"><i></i></div>
        `;
    }
}
customElements.define('period-bar', PeriodBar);

class OrderTabs extends HTMLElement {
    connectedCallback() {
        this.attachShadow({ mode: 'open' });
        this.shadowRoot.innerHTML = `
            <style>${ROW_CSS}
                :host { height: 51px; padding: 0 0 1px 8px; color: #3c3c3c; border-bottom: 1px solid #ececec; }
                .pill { width: 87px; height: 40px; color: #444; }
            </style>
            ${cells([
                [8, '<div class="pill">委单区</div>'], [131, '自定义指标/回测/实盘'], [384, 'AI 网格'], [499, '合约DCA'],
                [632, '组合下单'], [764, '跟单面板'], [918, 'AI分析'], [1988, icon('up', 20)], [2026, icon('corners', 22)]
            ], 2050)}
        `;
    }
}
customElements.define('order-tabs', OrderTabs);

class StatusBar extends HTMLElement {
    connectedCallback() {
        this.attachShadow({ mode: 'open' });
        this.shadowRoot.innerHTML = `
            <style>${ROW_CSS}
                :host { height: 52px; padding: 4px 0 0 14px; color: #444; font-size: 19.500px; position: relative; }
                .big { font-size: 21px; color: #000; }
                .route { font-size: 20.500px; }
                .time { letter-spacing: .65px; }
                .ratio { letter-spacing: .3px; }
                .soft { color: #666; }
                .up { color: #1fb98a; }
                .mark { position: absolute; left: 1920px; top: 9px; display: flex; align-items: center; gap: 4px; color: rgba(255,255,255,.7); font-size: 24.500px; text-shadow: 1px 1px 2px rgba(0,0,0,.5); }
                .mark svg { filter: drop-shadow(1px 1px 1px rgba(0,0,0,.3)); }
            </style>
            ${cells([
                [14, '资产(₮)'], [121, '实时资产风控', 'big'], [321, icon('pencil', 18), 'soft'], [375, '恐惧&amp;amp;贪婪指数'],
                [565, '+16.13%', 'up'], [655, '72'], [728, 'OKX-BTC多空持仓人数比', 'ratio'], [963, '震荡盘整'], [1058, '1.10'],
                [1145, '伦敦金'], [1219, '+0.37%', 'up'], [1298, '4,538.52'], [1749, icon('wifi', 25, 'weight="1.7"')],
                [1789, '线路1 :', 'route'], [1860, '<span style="color:#f0a020">良</span>'], [1920, 'SGT 08/21 12:18:08', 'route time']
            ], 2120)}
            <div class="mark">
                <svg width="28" height="30" viewBox="0 0 30 30"><path d="M15 1l13 14-13 14L2 15z" fill="#fff" fill-opacity=".8"/><path d="M15 10l5 5-5 5-5-5z" fill="#ccc"/></svg>
                <span>@理想学院官方</span>
            </div>
        `;
    }
}
customElements.define('status-bar', StatusBar);

class SideRail extends HTMLElement {
    connectedCallback() {
        const upper = ['rlist', 'rdoc', 'rdollar', 'rchart', 'rmonitor', 'retf', 'rbot'];
        this.attachShadow({ mode: 'open' });
        this.shadowRoot.innerHTML = `
            <style>
                :host { display: flex; flex-direction: column; align-items: center; position: relative; height: 100%; color: #666; }
                .i { flex: none; display: flex; align-items: center; justify-content: center; width: 64px; height: 84.200px; }
                .i:first-of-type { margin-top: -1px; }
                .bot { color: #111; }
                hr { width: 100%; border: 0; border-top: 1px solid #e6e6e6; margin: 0; }
                .handle { position: absolute; left: -10px; top: 570px; width: 10px; height: 57px; border-radius: 3px 0 0 3px; background: #d6d6d6; display: flex; align-items: center; justify-content: flex-end; }
                .handle i { border: 6px solid transparent; border-left: 0; border-right-color: #666; }
            </style>
            ${upper.map(n => `<div class="i ${n === 'rbot' ? 'bot' : ''}">${icon(n, 27, 'weight="1.6"')}</div>`).join('')}
            <hr>
            <div class="i" style="height:105px">${icon('rswap', 27, 'weight="1.5"')}</div>
            <div style="flex:1"></div>
            <div class="i">${icon('rgrid', 24)}</div>
            <div class="i">${icon('rheadset', 25)}</div>
            <div class="i" style="height:80px;margin-bottom:22px">${icon('rball', 29)}</div>
            <div class="handle"><i></i></div>
        `;
    }
}
customElements.define('side-rail', SideRail);

class FloatTools extends HTMLElement {
    connectedCallback() {
        this.attachShadow({ mode: 'open' });
        this.shadowRoot.innerHTML = `
            <style>
                :host { position: absolute; left: 1864px; top: 1176px; width: 199px; height: 44px; box-sizing: border-box; padding: 0 11px 0 10px; display: flex; align-items: center; justify-content: space-between; background: #fff; border-radius: 5px; border: 1px solid #ddd; box-shadow: 0 1px 6px rgba(0,0,0,.15); color: #111; }
                .w { position: relative; display: flex; }
                .dot { position: absolute; right: -3px; top: -3px; width: 5px; height: 5px; border-radius: 50%; background: #fa3b46; }
            </style>
            <span class="w">${icon('fpay', 21)}<i class="dot"></i></span>
            ${icon('fmic', 20, 'weight="2"')}
            <span class="w">${icon('fsend', 20, 'weight="1.8"')}<i class="dot"></i></span>
            ${icon('flang', 20, 'weight="2"')}
            ${icon('fai', 20, 'weight="2"')}
        `;
    }
}
customElements.define('float-tools', FloatTools);
</script>
</body>
</html>
